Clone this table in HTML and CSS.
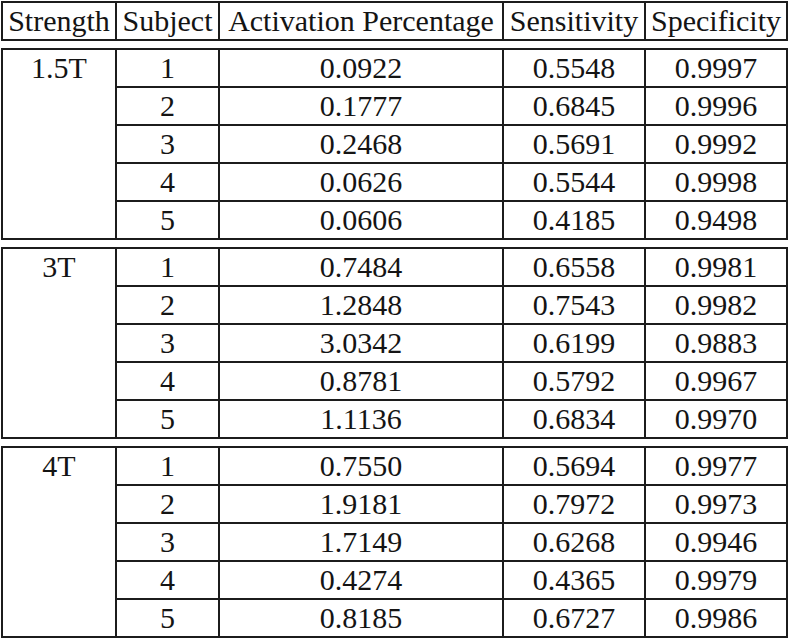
FILE: index.html
```html
<!DOCTYPE html>
<html lang="en">
<head>
<meta charset="utf-8">
<title>Activation results by field strength</title>
<link rel="stylesheet" href="styles.css">
</head>
<body>
<div class="sheet">
  <table class="grid">
    <colgroup><col class="c1"><col class="c2"><col class="c3"><col class="c4"><col class="c5"></colgroup>
    <tr><td>Strength</td><td>Subject</td><td>Activation Percentage</td><td>Sensitivity</td><td>Specificity</td></tr>
  </table>
  <table class="grid">
    <colgroup><col class="c1"><col class="c2"><col class="c3"><col class="c4"><col class="c5"></colgroup>
    <tr><td class="strength" rowspan="5">1.5T</td><td>1</td><td>0.0922</td><td>0.5548</td><td>0.9997</td></tr>
    <tr><td>2</td><td>0.1777</td><td>0.6845</td><td>0.9996</td></tr>
    <tr><td>3</td><td>0.2468</td><td>0.5691</td><td>0.9992</td></tr>
    <tr><td>4</td><td>0.0626</td><td>0.5544</td><td>0.9998</td></tr>
    <tr><td>5</td><td>0.0606</td><td>0.4185</td><td>0.9498</td></tr>
  </table>
  <table class="grid">
    <colgroup><col class="c1"><col class="c2"><col class="c3"><col class="c4"><col class="c5"></colgroup>
    <tr><td class="strength" rowspan="5">3T</td><td>1</td><td>0.7484</td><td>0.6558</td><td>0.9981</td></tr>
    <tr><td>2</td><td>1.2848</td><td>0.7543</td><td>0.9982</td></tr>
    <tr><td>3</td><td>3.0342</td><td>0.6199</td><td>0.9883</td></tr>
    <tr><td>4</td><td>0.8781</td><td>0.5792</td><td>0.9967</td></tr>
    <tr><td>5</td><td>1.1136</td><td>0.6834</td><td>0.9970</td></tr>
  </table>
  <table class="grid">
    <colgroup><col class="c1"><col class="c2"><col class="c3"><col class="c4"><col class="c5"></colgroup>
    <tr><td class="strength" rowspan="5">4T</td><td>1</td><td>0.7550</td><td>0.5694</td><td>0.9977</td></tr>
    <tr><td>2</td><td>1.9181</td><td>0.7972</td><td>0.9973</td></tr>
    <tr><td>3</td><td>1.7149</td><td>0.6268</td><td>0.9946</td></tr>
    <tr><td>4</td><td>0.4274</td><td>0.4365</td><td>0.9979</td></tr>
    <tr><td>5</td><td>0.8185</td><td>0.6727</td><td>0.9986</td></tr>
  </table>
</div>
</body>
</html>
```
FILE: styles.css
```css
html, body {
  margin: 0;
  padding: 0;
  background: #ffffff;
  font-family: "Liberation Serif", serif;
}
.sheet {
  display: flex;
  flex-direction: column;
  gap: 7px;
  padding: 1px 0 0 1px;
  width: 787px;
  font-family: "Liberation Serif", serif;
}
.grid {
  border-collapse: separate;
  border-spacing: 0;
  table-layout: fixed;
  width: 787px;
  border-top: 2px solid #1c1c1c;
  border-left: 2px solid #1c1c1c;
  font-family: "Liberation Serif", serif;
  font-size: 30px;
  color: #141414;
}
.grid td {
  padding: 0;
  font-family: "Liberation Serif", serif;
  line-height: 36px;
  text-align: center;
  vertical-align: middle;
  white-space: nowrap;
  border-right: 2px solid #1c1c1c;
  border-bottom: 2px solid #1c1c1c;
}
.grid td.strength {
  vertical-align: top;
}
.c1 { width: 114px; }
.c2 { width: 103px; }
.c3 { width: 284px; }
.c4 { width: 142px; }
.c5 { width: 142px; }
```
